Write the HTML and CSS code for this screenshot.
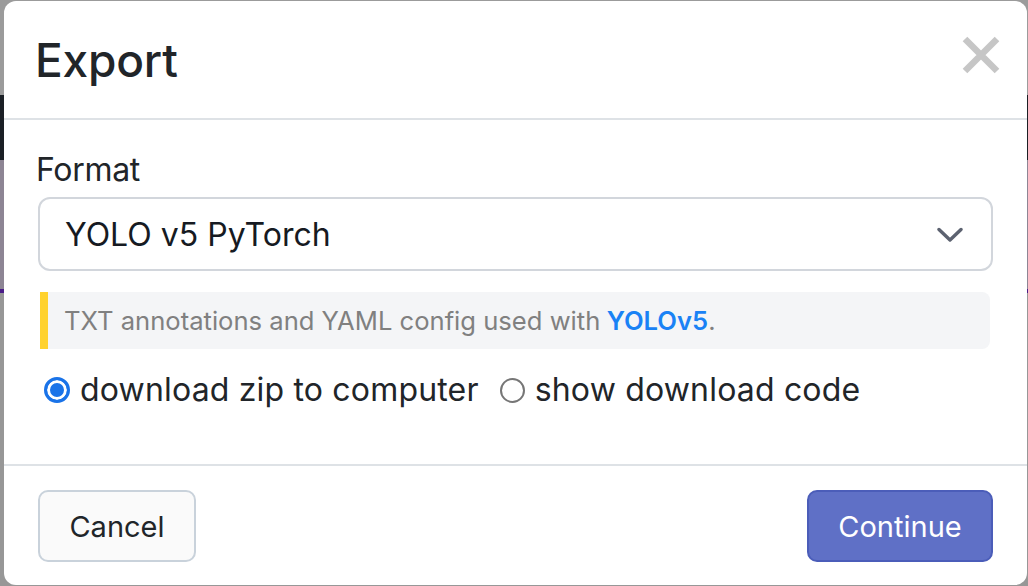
FILE: index.html
```html
<!DOCTYPE html>
<html>
<head>
<meta charset="utf-8">
<link rel="stylesheet" href="styles.css">
</head>
<body>
<div class="modal">
  <div class="modal-header">
    <h1 class="modal-title">Export</h1>
    <button class="close" aria-label="Close">
      <svg width="38" height="38" viewBox="0 0 38 38"><path d="M3 3 L35 35 M35 3 L3 35" stroke="#c6c6c6" stroke-width="6.5" stroke-linecap="butt"/></svg>
    </button>
  </div>
  <div class="modal-body">
    <div class="label">Format</div>
    <div class="select">
      <span>YOLO v5 PyTorch</span>
      <svg class="chevron" width="26" height="16" viewBox="0 0 26 16"><path d="M2 2.5 L13 13 L24 2.5" fill="none" stroke="#5c6270" stroke-width="3.4" stroke-linecap="round" stroke-linejoin="round"/></svg>
    </div>
    <div class="info">TXT annotations and YAML config used with <a class="link">YOLOv5</a>.</div>
    <div class="radios">
      <label class="radio"><span class="dot checked"></span>download zip to computer</label>
      <label class="radio"><span class="dot"></span>show download code</label>
    </div>
  </div>
  <div class="modal-footer">
    <button class="btn btn-cancel">Cancel</button>
    <button class="btn btn-continue">Continue</button>
  </div>
</div>
</body>
</html>
```
FILE: styles.css
```css
html, body {
  margin: 0;
  padding: 0;
}
body {
  width: 1028px;
  height: 586px;
  overflow: hidden;
  font-family: Inter, "Noto Sans", sans-serif;
  background: linear-gradient(to bottom,
    #9b9b9b 0, #9b9b9b 95px,
    #1b1f25 95px, #1b1f25 160px,
    #8d8594 160px, #8d8594 289px,
    #4a1c88 289px, #4a1c88 293px,
    #979797 293px, #979797 100%);
  padding-top: 1px;
  box-sizing: border-box;
}
.modal {
  width: 1023px;
  height: 584px;
  margin-left: 4px;
  background: #fff;
  border-radius: 12px;
  display: flex;
  flex-direction: column;
  box-sizing: border-box;
}
.modal-header {
  height: 119px;
  box-sizing: border-box;
  padding: 0 27px 0 31px;
  border-bottom: 2px solid #dee2e6;
  display: flex;
  align-items: center;
  justify-content: space-between;
}
.modal-title {
  margin: 0;
  font-size: 46px;
  font-weight: 500;
  color: #212529;
  letter-spacing: -0.2px;
}
.close {
  border: 0;
  background: none;
  padding: 0;
  width: 38px;
  height: 38px;
  margin-top: -10px;
}
.close svg { display: block; }
.modal-body {
  flex: 1;
  padding: 26px 34px 0 34px;
  box-sizing: border-box;
}
.label {
  font-size: 32px;
  line-height: 48px;
  color: #212529;
  margin-left: -2px;
  margin-bottom: 3px;
  letter-spacing: -0.3px;
}
.select {
  height: 74px;
  box-sizing: border-box;
  border: 2px solid #d2d6dc;
  border-radius: 12px;
  display: flex;
  align-items: center;
  justify-content: space-between;
  padding: 0 28px 0 25px;
  font-size: 32px;
  color: #161a22;
}
.chevron { display: block; margin-top: 2px; }
.info {
  margin: 21px 3px 0 2px;
  height: 57px;
  box-sizing: border-box;
  background: #f4f5f7;
  border-left: 8px solid #ffd22e;
  border-radius: 0 8px 8px 0;
  display: flex;
  align-items: center;
  padding-left: 16px;
  font-size: 25.6px;
  color: #808080;
}
.link {
  color: #1a82f5;
  font-weight: 600;
  margin-left: 0.25em;
}
.radios {
  margin-top: 17px;
  display: flex;
  align-items: center;
  font-size: 32px;
  line-height: 48px;
  color: #212529;
  padding-left: 6px;
  letter-spacing: 0.18px;
}
.radio {
  display: flex;
  align-items: center;
  margin-right: 21px;
}
.dot {
  width: 25px;
  height: 25px;
  box-sizing: border-box;
  border-radius: 50%;
  border: 2px solid #767676;
  margin-right: 10px;
  background: #fff;
}
.dot.checked {
  width: 26px;
  height: 26px;
  border: 3px solid #1a73e8;
  background: #1a73e8;
  box-shadow: inset 0 0 0 3px #fff;
}
.modal-footer {
  height: 121px;
  box-sizing: border-box;
  border-top: 2px solid #dee2e6;
  padding: 24px 34px 0 34px;
  display: flex;
  justify-content: space-between;
  align-items: flex-start;
}
.btn {
  height: 72px;
  box-sizing: border-box;
  border-radius: 10px;
  font-family: Inter, "Noto Sans", sans-serif;
  font-size: 29px;
  padding: 0;
}
.btn-cancel {
  width: 158px;
  background: #fafafa;
  border: 2px solid #c9d2db;
  color: #212529;
}
.btn-continue {
  width: 186px;
  background: #5f70c6;
  border: 2px solid #4b5db9;
  color: #fff;
}
```
